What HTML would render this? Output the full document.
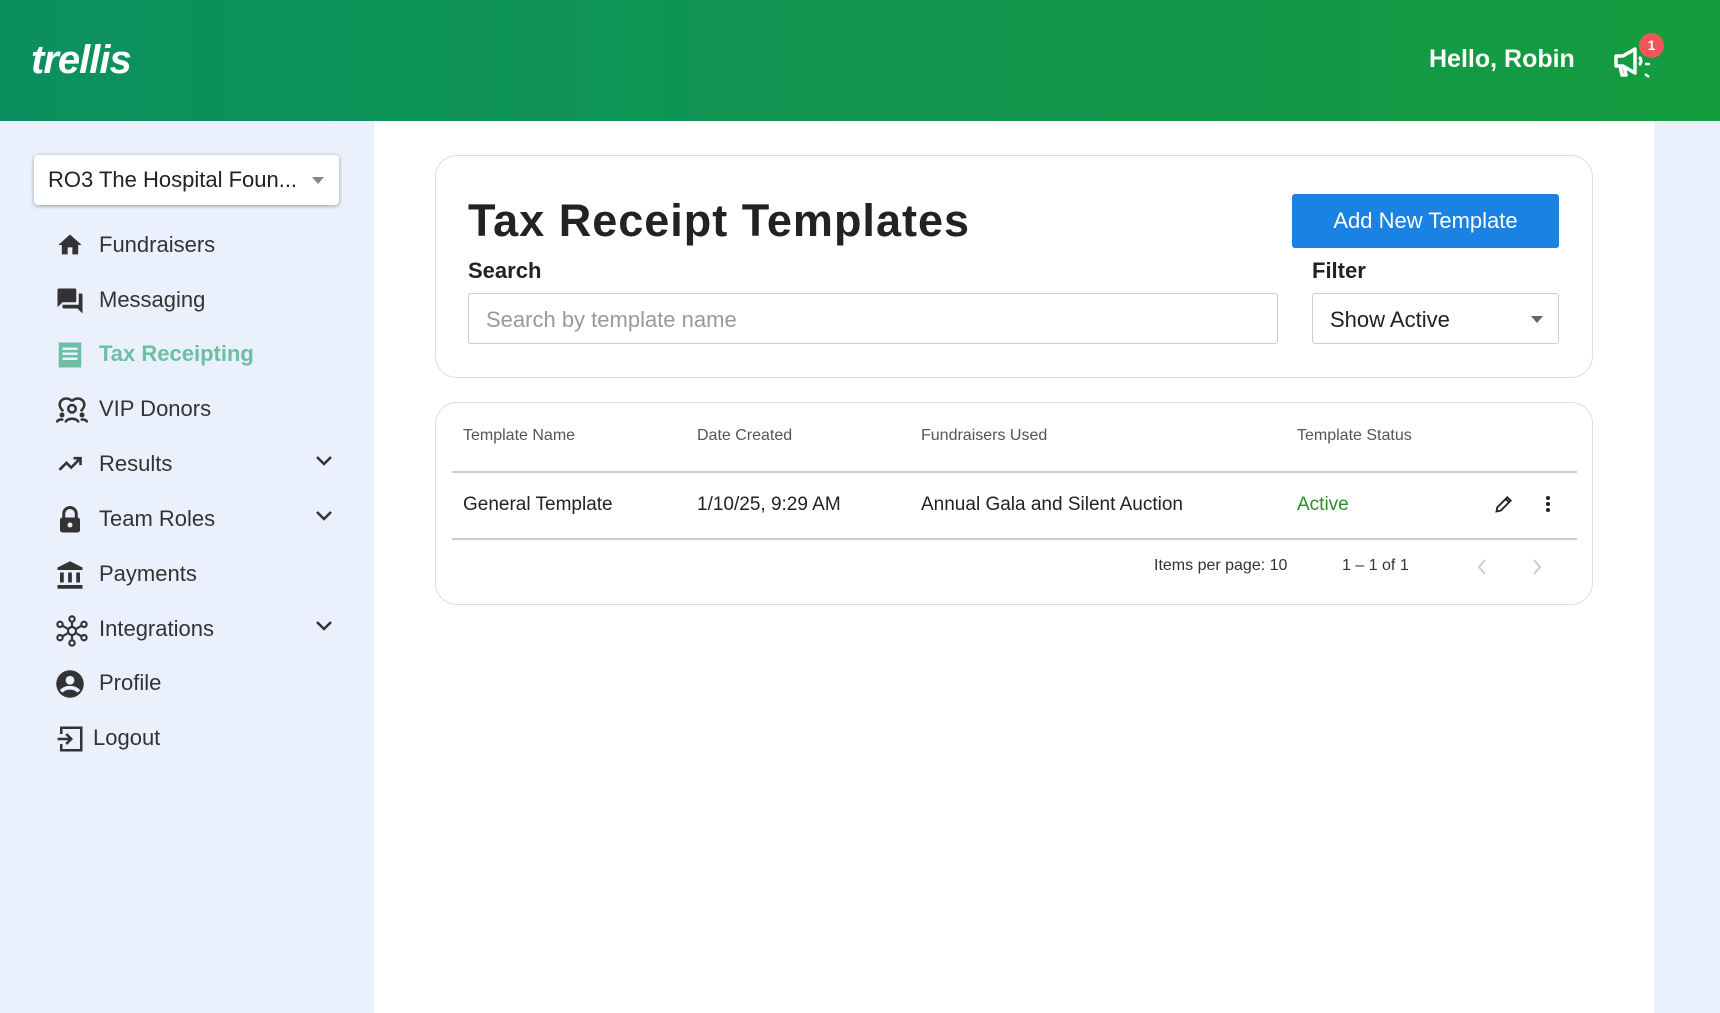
<!DOCTYPE html>
<html><head><meta charset="utf-8"><style>
*{box-sizing:border-box;margin:0;padding:0}
body{width:1720px;height:1013px;overflow:hidden;font-family:"Liberation Sans",sans-serif;background:#fff;position:relative;color:#222}
.hdr{position:absolute;left:0;top:0;width:1720px;height:121px;background:linear-gradient(90deg,#0b8f5f,#149c3f)}
.logo{position:absolute;left:31px;top:38px;color:#fff;font-size:40px;font-style:italic;font-weight:bold;letter-spacing:-1px}
.hello{position:absolute;left:1429px;top:45px;color:#fff;font-size:25px;font-weight:bold}
.side{position:absolute;left:0;top:121px;width:374px;height:892px;background:#eaf1fc}
.rstrip{position:absolute;left:1654px;top:121px;width:66px;height:892px;background:#eaf1fc}
.orgsel{position:absolute;left:34px;top:155px;width:305px;height:50px;background:#fff;border-radius:4px;box-shadow:0 1px 4px rgba(0,0,0,.35);font-size:22px;padding:12px 0 0 14px;color:#222}
.orgsel:after{content:"";position:absolute;right:15px;top:22px;border:6px solid transparent;border-top:7px solid #888}
.nav{position:absolute;left:0;width:374px;height:40px;font-size:22px;color:#333}
.nav svg{position:absolute;left:55px;top:6px}
.nav span{position:absolute;left:99px;top:7px}
.nav .ch{position:absolute;left:314px;top:10px}
.act{color:#6cbfa3;font-weight:bold}
.card{position:absolute;left:435px;width:1158px;background:#fff;border:1.5px solid #ddd;border-radius:22px}
h1{position:absolute;left:468px;top:195px;font-size:45px;font-weight:bold;color:#222;letter-spacing:1px}
.btn{position:absolute;left:1292px;top:194px;width:267px;height:54px;background:#1a82e2;color:#fff;border-radius:3px;font-size:22px;text-align:center;line-height:54px}
.lbl{position:absolute;top:258px;font-size:22px;font-weight:bold;color:#222}
.inp{position:absolute;top:293px;height:51px;border:1.5px solid #ccc;border-radius:3px;font-size:22px;padding:13px 0 0 17px;background:#fff}
.th{position:absolute;top:427px;font-size:16px;color:#555}
.td{position:absolute;top:494px;font-size:19px;color:#222}
.ln{position:absolute;left:452px;width:1125px;height:1.5px;background:#ccc}
.pg{position:absolute;top:557px;font-size:16px;color:#333}
</style></head><body>
<div class="hdr"></div>
<div class="logo">trellis</div>
<div class="hello">Hello, Robin</div>
<svg style="position:absolute;left:1612px;top:44px" width="44" height="36" viewBox="0 0 44 36"><path d="M4 12h7l12-7v24l-12-7H4z M8 22l2 9h4l-2-9" fill="none" stroke="#fff" stroke-width="3.5" stroke-linejoin="round"/><path d="M27 13a5 5 0 0 1 0 8" stroke="#fff" stroke-width="3" fill="none"/><path d="M33 20h5M33 30l4 3" stroke="#fff" stroke-width="2.5"/></svg>
<div style="position:absolute;left:1639px;top:33px;width:25px;height:25px;border-radius:50%;background:#f2555a;color:#fff;font-size:14px;font-weight:bold;text-align:center;line-height:25px">1</div>
<div class="side"></div><div class="rstrip"></div>
<div class="orgsel">RO3 The Hospital Foun...</div>

<div class="nav" style="top:225px"><svg width="30" height="28" viewBox="0 0 24 24"><path d="M10 20v-6h4v6h5v-8h3L12 3 2 12h3v8z" fill="#333"/></svg><span>Fundraisers</span></div>
<div class="nav" style="top:280px"><svg width="30" height="30" viewBox="0 0 24 24"><path d="M21 6h-2v9H6v2c0 .6.4 1 1 1h11l4 4V7c0-.6-.4-1-1-1zm-4 6V3c0-.6-.4-1-1-1H3c-.6 0-1 .4-1 1v14l4-4h10c.6 0 1-.4 1-1z" fill="#333"/></svg><span>Messaging</span></div>
<div class="nav act" style="top:334px"><svg width="30" height="30" viewBox="0 0 24 24"><path d="M3 2h18v20H3z" fill="#6cbfa3"/><path d="M6 7h12M6 11h12M6 15h12" stroke="#eaf1fc" stroke-width="2"/></svg><span>Tax Receipting</span></div>
<div class="nav" style="top:389px"><svg width="34" height="30" viewBox="0 0 26 24"><path d="M13 5c-2-3-7-3-9 0-2 3 0 6 2 8M13 5c2-3 7-3 9 0 2 3 0 6-2 8" fill="none" stroke="#333" stroke-width="2"/><circle cx="13" cy="11" r="3" fill="none" stroke="#333" stroke-width="2"/><circle cx="5" cy="16" r="2" fill="#333"/><circle cx="21" cy="16" r="2" fill="#333"/><path d="M8 22c0-4 10-4 10 0M1 22c0-2 3-3 5-2M25 22c0-2-3-3-5-2" fill="none" stroke="#333" stroke-width="2"/></svg><span>VIP Donors</span></div>
<div class="nav" style="top:444px"><svg width="30" height="28" viewBox="0 0 24 24"><path d="M3 17l6-6 4 4 8-8M15 7h6v6" fill="none" stroke="#333" stroke-width="2.2"/></svg><span>Results</span><svg class="ch" width="20" height="14" viewBox="0 0 20 14"><path d="M3 3l7 7 7-7" fill="none" stroke="#333" stroke-width="2.5"/></svg></div>
<div class="nav" style="top:499px"><svg width="30" height="30" viewBox="0 0 24 24"><path d="M7 10V7a5 5 0 0 1 10 0v3" fill="none" stroke="#333" stroke-width="2.4"/><rect x="4" y="10" width="16" height="12" rx="2" fill="#333"/><circle cx="12" cy="16" r="2" fill="#eaf1fc"/></svg><span>Team Roles</span><svg class="ch" width="20" height="14" viewBox="0 0 20 14"><path d="M3 3l7 7 7-7" fill="none" stroke="#333" stroke-width="2.5"/></svg></div>
<div class="nav" style="top:554px"><svg width="30" height="30" viewBox="0 0 24 24"><path d="M12 1L2 6v2h20V6z M4 10h3v8H4z M10.5 10h3v8h-3z M17 10h3v8h-3z M2 20h20v3H2z" fill="#333"/></svg><span>Payments</span></div>
<div class="nav" style="top:609px"><svg width="34" height="32" viewBox="0 0 24 24"><g stroke="#333" stroke-width="1.6" fill="none"><circle cx="12" cy="12" r="3"/><circle cx="12" cy="3" r="2"/><circle cx="12" cy="21" r="2"/><circle cx="3" cy="7" r="2"/><circle cx="21" cy="7" r="2"/><circle cx="3" cy="17" r="2"/><circle cx="21" cy="17" r="2"/><path d="M12 5v4M12 15v4M5 8l4 2.5M19 8l-4 2.5M5 16l4-2.5M19 16l-4-2.5"/></g></svg><span>Integrations</span><svg class="ch" width="20" height="14" viewBox="0 0 20 14"><path d="M3 3l7 7 7-7" fill="none" stroke="#333" stroke-width="2.5"/></svg></div>
<div class="nav" style="top:663px"><svg width="30" height="30" viewBox="0 0 24 24"><circle cx="12" cy="12" r="11" fill="#333"/><circle cx="12" cy="9" r="3.5" fill="#eaf1fc"/><path d="M5 18c3-4 11-4 14 0" stroke="#eaf1fc" stroke-width="3" fill="none"/></svg><span>Profile</span></div>
<div class="nav" style="top:718px"><svg width="30" height="30" viewBox="0 0 24 24"><path d="M5 8V3h16v18H5v-5" fill="none" stroke="#333" stroke-width="2"/><path d="M2 12h11M9 8l4 4-4 4" fill="none" stroke="#333" stroke-width="2"/></svg><span style="left:93px">Logout</span></div>

<div class="card" style="top:155px;height:223px"></div>
<h1>Tax Receipt Templates</h1>
<div class="btn">Add New Template</div>
<div class="lbl" style="left:468px">Search</div>
<div class="lbl" style="left:1312px">Filter</div>
<div class="inp" style="left:468px;width:810px;color:#999">Search by template name</div>
<div class="inp" style="left:1312px;width:247px;color:#222">Show Active</div>
<div style="position:absolute;left:1531px;top:316px;border:6px solid transparent;border-top:7px solid #666"></div>

<div class="card" style="top:402px;height:203px"></div>
<div class="th" style="left:463px">Template Name</div>
<div class="th" style="left:697px">Date Created</div>
<div class="th" style="left:921px">Fundraisers Used</div>
<div class="th" style="left:1297px">Template Status</div>
<div class="ln" style="top:471px"></div>
<div class="td" style="left:463px">General Template</div>
<div class="td" style="left:697px">1/10/25, 9:29 AM</div>
<div class="td" style="left:921px">Annual Gala and Silent Auction</div>
<div class="td" style="left:1297px;color:#2e8b2e">Active</div>
<svg style="position:absolute;left:1494px;top:494px" width="20" height="20" viewBox="0 0 24 24"><path d="M3 21l1-5L16 4l4 4L8 20zM14 6l4 4" fill="none" stroke="#222" stroke-width="2.2"/></svg>
<svg style="position:absolute;left:1542px;top:494px" width="12" height="20" viewBox="0 0 12 20"><circle cx="6" cy="4" r="2" fill="#222"/><circle cx="6" cy="10" r="2" fill="#222"/><circle cx="6" cy="16" r="2" fill="#222"/></svg>
<div class="ln" style="top:538px"></div>
<div class="pg" style="left:1154px">Items per page: 10</div>
<div class="pg" style="left:1342px">1 – 1 of 1</div>
<svg style="position:absolute;left:1475px;top:557px" width="14" height="20" viewBox="0 0 14 20"><path d="M10 3L4 10l6 7" fill="none" stroke="#ccc" stroke-width="2"/></svg>
<svg style="position:absolute;left:1530px;top:557px" width="14" height="20" viewBox="0 0 14 20"><path d="M4 3l6 7-6 7" fill="none" stroke="#ccc" stroke-width="2"/></svg>
</body></html>
